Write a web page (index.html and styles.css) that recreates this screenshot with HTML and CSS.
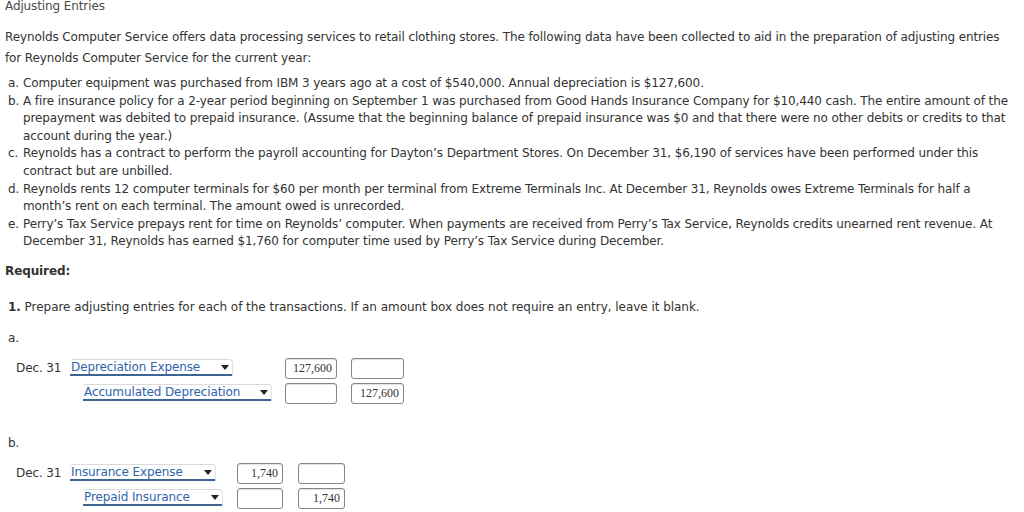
FILE: index.html
```html
<!DOCTYPE html>
<html lang="en">
<head>
<meta charset="utf-8">
<title>Adjusting Entries</title>
<link rel="stylesheet" href="styles.css">
</head>
<body>
<div class="page">
  <div class="title">Adjusting Entries</div>
  <p class="intro">Reynolds Computer Service offers data processing services to retail clothing stores. The following data have been collected to aid in the preparation of adjusting entries for Reynolds Computer Service for the current year:</p>
  <ol class="items">
    <li><span class="mark">a.</span><span class="txt">Computer equipment was purchased from IBM 3 years ago at a cost of $540,000. Annual depreciation is $127,600.</span></li>
    <li><span class="mark">b.</span><span class="txt">A fire insurance policy for a 2-year period beginning on September 1 was purchased from Good Hands Insurance Company for $10,440 cash. The entire amount of the prepayment was debited to prepaid insurance. (Assume that the beginning balance of prepaid insurance was $0 and that there were no other debits or credits to that account during the year.)</span></li>
    <li><span class="mark">c.</span><span class="txt">Reynolds has a contract to perform the payroll accounting for Dayton’s Department Stores. On December 31, $6,190 of services have been performed under this contract but are unbilled.</span></li>
    <li><span class="mark">d.</span><span class="txt">Reynolds rents 12 computer terminals for $60 per month per terminal from Extreme Terminals Inc. At December 31, Reynolds owes Extreme Terminals for half a month’s rent on each terminal. The amount owed is unrecorded.</span></li>
    <li><span class="mark">e.</span><span class="txt">Perry’s Tax Service prepays rent for time on Reynolds’ computer. When payments are received from Perry’s Tax Service, Reynolds credits unearned rent revenue. At December 31, Reynolds has earned $1,760 for computer time used by Perry’s Tax Service during December.</span></li>
  </ol>
  <div class="required">Required:</div>
  <p class="task"><b>1.</b> Prepare adjusting entries for each of the transactions. If an amount box does not require an entry, leave it blank.</p>

  <div class="part">
    <div class="part-label">a.</div>
    <div class="entry entry-a">
      <div class="date">Dec. 31</div>
      <div class="acct"><span class="sel sel-a1">Depreciation Expense<span class="arrow"></span></span></div>
      <div class="box debit">127,600</div>
      <div class="box"></div>

      <div class="date"></div>
      <div class="acct credit"><span class="sel sel-a2">Accumulated Depreciation<span class="arrow"></span></span></div>
      <div class="box debit"></div>
      <div class="box">127,600</div>
    </div>
  </div>

  <div class="part part-b">
    <div class="part-label">b.</div>
    <div class="entry entry-b">
      <div class="date">Dec. 31</div>
      <div class="acct"><span class="sel sel-b1">Insurance Expense<span class="arrow"></span></span></div>
      <div class="box debit">1,740</div>
      <div class="box"></div>

      <div class="date"></div>
      <div class="acct credit"><span class="sel sel-b2">Prepaid Insurance<span class="arrow"></span></span></div>
      <div class="box debit"></div>
      <div class="box">1,740</div>
    </div>
  </div>
</div>
</body>
</html>
```

FILE: styles.css
```css
html, body {
  margin: 0;
  padding: 0;
  background: #ffffff;
}

body {
  font-family: "DejaVu Sans", Verdana, sans-serif;
  font-size: 12px;
  letter-spacing: -0.11px;
  color: #333333;
}

.page {
  padding: 0 5px;
}

.title {
  color: #4a4a4a;
  line-height: 13px;
}

.intro {
  margin: 14px 0 0 0;
  line-height: 21px;
}

.items {
  list-style: none;
  margin: 6px 0 0 0;
  padding: 0;
  line-height: 17.6px;
}

.items li {
  display: flex;
  padding-left: 3px;
}

.mark {
  flex: 0 0 15px;
}

.txt {
  flex: 1;
}

.required {
  font-weight: bold;
  margin-top: 11px;
  line-height: 18px;
}

.task {
  margin: 18px 0 0 0;
  padding-left: 3px;
  line-height: 18px;
  letter-spacing: -0.04px;
}

.part {
  margin-top: 13px;
}

.part-b {
  margin-top: 30px;
}

.part-label {
  padding-left: 3px;
  line-height: 18px;
}

.entry {
  display: grid;
  grid-template-columns: 54px max-content 66px 53px;
  justify-content: start;
  row-gap: 4px;
  margin-top: 11px;
  padding-left: 11px;
  align-items: center;
}

.entry-b {
  grid-template-columns: 54px max-content 61px 47px;
}

.date {
  white-space: nowrap;
}

.acct {
  height: 21px;
  display: flex;
  align-items: center;
  padding-right: 14px;
}

.entry-b .acct {
  padding-right: 15px;
}

.acct.credit {
  padding-left: 13px;
}

.sel {
  position: relative;
  display: inline-block;
  height: 14px;
  line-height: 14px;
  color: #2f64ab;
  background: #ffffff;
  border-bottom: 2px solid #3d6592;
  border-radius: 3px 3px 0 0;
  box-shadow: 0 -1px 1px rgba(0,0,0,0.15), 1px 0 1px rgba(0,0,0,0.12);
  padding-left: 1px;
  padding-right: 3px;
}

.sel-a1 { width: 158px; }
.sel-a2 { width: 184px; }
.sel-b1 { width: 141px; }
.sel-b2 { width: 135px; }

.arrow {
  position: absolute;
  right: 3px;
  top: 5px;
  width: 0;
  height: 0;
  border-left: 4px solid transparent;
  border-right: 4px solid transparent;
  border-top: 5px solid #222222;
}

.box {
  height: 19px;
  border: 1px solid #858585;
  border-radius: 3px;
  box-shadow: inset 0 1px 1px rgba(0,0,0,0.12);
  background: #ffffff;
  font-family: "Liberation Serif", "Times New Roman", serif;
  font-size: 12px;
  letter-spacing: 0;
  color: #333333;
  text-align: right;
  line-height: 18px;
  padding-right: 4px;
}

.box.debit {
  margin-right: 14px;
}

.entry-b .box.debit {
  margin-right: 15px;
}
```
